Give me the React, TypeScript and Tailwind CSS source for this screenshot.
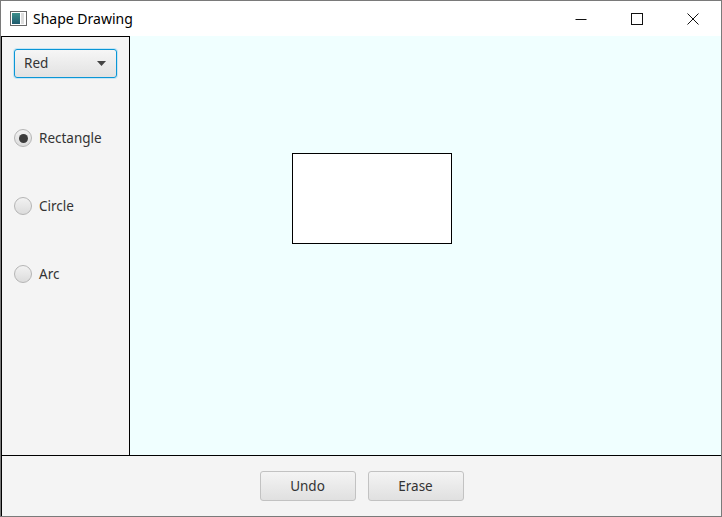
export default function App() {
  const radios = ["Rectangle", "Circle", "Arc"];
  return (
    <div className="flex h-[517px] w-[722px] flex-col border border-[#7a7a7a] bg-white font-['Open_Sans',sans-serif] text-[13.5px] text-[#333]">
      {/* title bar */}
      <div className="flex h-[35px] shrink-0 items-center bg-white text-black">
        <div className="ml-[9px] flex h-[15px] w-[17px] border border-[#666] bg-white p-[1px]">
          <div className="w-[8px] bg-gradient-to-b from-[#3c8f8a] to-[#1e5a6e]" />
          <div className="ml-[1px] w-[3px] bg-[#ddd]" />
        </div>
        <span className="ml-[6px] text-[14px]">Shape Drawing</span>
        <div className="ml-auto flex h-full">
          {["min", "max", "close"].map((k) => (
            <div key={k} className="flex h-full w-[56px] items-center justify-center">
              <svg width="12" height="12" viewBox="0 0 12 12" fill="none" stroke="#111" strokeWidth="1">
                {k === "min" && <path d="M0.5 6.5h11" />}
                {k === "max" && <rect x="0.5" y="0.5" width="11" height="11" />}
                {k === "close" && <path d="M0.5 0.5l11 11M11.5 0.5l-11 11" />}
              </svg>
            </div>
          ))}
        </div>
      </div>
      <div className="flex min-h-0 flex-1">
        {/* left panel */}
        <div className="flex w-[129px] shrink-0 flex-col border-x border-t border-black bg-[#f4f4f4] pl-[12px]">
          <div className="mt-[12px] flex h-[29px] w-[103px] items-center rounded-[3px] border border-[#0a96d6] bg-gradient-to-b from-[#f6f6f6] to-[#e2e2e2] pl-[9px] pr-[10px] shadow-[0_0_0_1px_#c7e6f5]">
            <span>Red</span>
            <svg className="ml-auto" width="9" height="5" viewBox="0 0 9 5"><path d="M0 0h9L4.5 5z" fill="#444" /></svg>
          </div>
          {radios.map((r, i) => (
            <div key={r} className={`flex items-center ${i === 0 ? "mt-[50px]" : "mt-[48px]"} h-[20px]`}>
              <div className="flex h-[18px] w-[18px] items-center justify-center rounded-full border border-[#b5b5b5] bg-gradient-to-b from-[#f2f2f2] to-[#dcdcdc]">
                {i === 0 && <div className="h-[9px] w-[9px] rounded-full bg-[#3c3c3c]" />}
              </div>
              <span className="ml-[7px]">{r}</span>
            </div>
          ))}
        </div>
        {/* canvas */}
        <div className="relative flex-1 bg-[#f0ffff]">
          <div className="absolute left-[162px] top-[117px] h-[91px] w-[160px] border border-black bg-white" />
        </div>
      </div>
      {/* bottom bar */}
      <div className="flex h-[61px] shrink-0 items-center justify-center gap-[12px] border-t border-l border-black bg-[#f4f4f4]">
        {["Undo", "Erase"].map((b) => (
          <div key={b} className="flex h-[30px] w-[96px] items-center justify-center rounded-[3px] border border-[#c2c2c2] bg-gradient-to-b from-[#f4f4f4] to-[#e0e0e0]">
            {b}
          </div>
        ))}
      </div>
    </div>
  );
}
